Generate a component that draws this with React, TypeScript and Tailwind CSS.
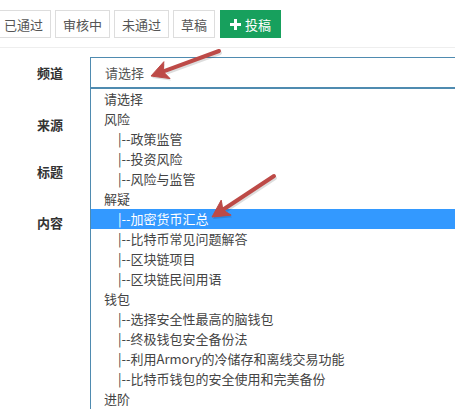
import React from 'react';

const tabs = ['已通过', '审核中', '未通过', '草稿'];

type Opt = { label: string; sub?: boolean; active?: boolean };

const options: Opt[] = [
  { label: '请选择' },
  { label: '风险' },
  { label: '|--政策监管', sub: true },
  { label: '|--投资风险', sub: true },
  { label: '|--风险与监管', sub: true },
  { label: '解疑' },
  { label: '|--加密货币汇总', sub: true, active: true },
  { label: '|--比特币常见问题解答', sub: true },
  { label: '|--区块链项目', sub: true },
  { label: '|--区块链民间用语', sub: true },
  { label: '钱包' },
  { label: '|--选择安全性最高的脑钱包', sub: true },
  { label: '|--终极钱包安全备份法', sub: true },
  { label: '|--利用Armory的冷储存和离线交易功能', sub: true },
  { label: '|--比特币钱包的安全使用和完美备份', sub: true },
  { label: '进阶' },
];

// annotation arrow, tail -> tip
function Arrow({ x1, y1, x2, y2 }: { x1: number; y1: number; x2: number; y2: number }) {
  const dx = x2 - x1;
  const dy = y2 - y1;
  const len = Math.hypot(dx, dy);
  const ux = dx / len;
  const uy = dy / len;
  const hl = 17;
  const hw = 9;
  const bx = x2 - ux * hl;
  const by = y2 - uy * hl;
  const head = `${x2},${y2} ${bx - uy * hw},${by + ux * hw} ${bx + ux * 4},${by + uy * 4} ${bx + uy * hw},${by - ux * hw}`;
  return (
    <g>
      <line x1={x1 + 1} y1={y1 + 2} x2={bx + 1} y2={by + 2} stroke="#00000022" strokeWidth={4} strokeLinecap="round" />
      <polygon points={head} fill="#00000022" transform="translate(1 2)" />
      <line x1={x1} y1={y1} x2={bx + ux * 3} y2={by + uy * 3} stroke="#bd4a47" strokeWidth={4} strokeLinecap="round" />
      <polygon points={head} fill="#bd4a47" stroke="#bd4a47" strokeWidth={1} strokeLinejoin="round" />
    </g>
  );
}

export default function App() {
  return (
    <div className="relative w-[455px] h-[409px] overflow-hidden bg-white text-[13px] font-['Noto_Sans_CJK_SC',sans-serif]">
      <div className="flex gap-[4px] pt-[10px] -ml-[4px]">
        {tabs.map((t) => (
          <div key={t} className="h-[28px] px-[7px] flex items-center border border-[#ddd] bg-white text-[#555] leading-none">
            {t}
          </div>
        ))}
        <div className="ml-[1px] h-[28px] px-[10px] flex items-center gap-[4px] bg-[#17a05d] text-white leading-none">
          <svg width="11" height="11" viewBox="0 0 11 11"><path d="M4 0h3v4h4v3H7v4H4V7H0V4h4z" fill="#fff" /></svg>
          投稿
        </div>
      </div>
      <div className="mt-[9px] border-t border-[#eee]" />

      <div className="mt-[9px] grid grid-cols-[90px_1fr]">
        <div className="h-[31px] flex items-center justify-end pr-[27px] font-bold text-[#333]">频道</div>
        <div className="relative">
          <div className="h-[31px] w-[400px] border border-[#4f8bb0] pl-[14px] flex items-center text-[#555] leading-none">请选择</div>
          <div className="absolute left-0 top-full w-[400px] border border-[#4f8bb0] bg-white text-[#444]">
            {options.map((o) => (
              <div
                key={o.label}
                className={`h-[20px] leading-[20px] whitespace-nowrap ${o.sub ? 'pl-[27px]' : 'pl-[13px]'} ${o.active ? 'bg-[#3399ff] text-white' : ''}`}
              >
                {o.label}
              </div>
            ))}
          </div>
        </div>

        <div className="mt-[21px] h-[31px] flex items-center justify-end pr-[27px] font-bold text-[#333]">来源</div>
        <div className="mt-[21px] h-[31px]" />
        <div className="mt-[16px] h-[31px] flex items-center justify-end pr-[27px] font-bold text-[#333]">标题</div>
        <div className="mt-[16px] h-[31px]" />
        <div className="mt-[20px] h-[31px] flex items-center justify-end pr-[27px] font-bold text-[#333]">内容</div>
        <div className="mt-[20px] h-[31px]" />
      </div>

      <svg className="absolute inset-0 pointer-events-none" width="455" height="409">
        <Arrow x1={219} y1={51} x2={151} y2={76} />
        <Arrow x1={274} y1={176} x2={212} y2={217} />
      </svg>
    </div>
  );
}
